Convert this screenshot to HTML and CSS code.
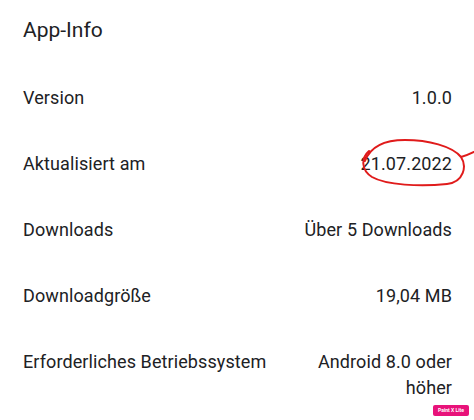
FILE: index.html
```html
<!DOCTYPE html>
<html lang="de">
<head>
    <meta charset="UTF-8">
    <meta name="viewport" content="width=device-width, initial-scale=1.0">
    <title>App-Info</title>
    <link rel="stylesheet" href="styles.css">
</head>
<body>

<div class="sheet">
    <h1 class="title">App-Info</h1>

    <!-- Liste der Informationen -->
    <div class="row">
        <span class="label">Version</span>
        <span class="value">1.0.0</span>
    </div>
    <div class="row">
        <span class="label">Aktualisiert am</span>
        <span class="value">21.07.2022</span>
    </div>
    <div class="row">
        <span class="label">Downloads</span>
        <span class="value">Über 5 Downloads</span>
    </div>
    <div class="row">
        <span class="label">Downloadgröße</span>
        <span class="value">19,04 MB</span>
    </div>
    <div class="row">
        <span class="label">Erforderliches Betriebssystem</span>
        <span class="value">Android 8.0 oder höher</span>
    </div>

    <!-- Markierung um das Datum -->
    <svg class="scribble" width="474" height="420" viewBox="0 0 474 420">
        <path d="M369 151 C361 158 361 170 372 177 C386 185 420 187 447 184 C464 182 467 166 461 157 C452 146 428 140 405 140 C388 140 371 145 365 161 M461 157 C465 156 470 154 474 152"
              fill="none" stroke="#e01b1b" stroke-width="2" stroke-linecap="round"/>
    </svg>

    <div class="badge">Paint X Lite</div>
</div>

</body>
</html>
```

FILE: styles.css
```css
body {
    margin: 0;
    background-color: #fff;
    font-family: Roboto, "Noto Sans", sans-serif;
    color: #202124;
}
.sheet {
    position: relative;
    width: 474px;
    height: 420px;
    padding: 0 22px 0 23px;
    box-sizing: border-box;
    overflow: hidden;
}
.title {
    margin: 0;
    padding: 16px 0 21px;
    font-size: 21px;
    font-weight: 400;
    line-height: 28px;
}
.row {
    display: flex;
    justify-content: space-between;
    align-items: flex-start;
    padding: 20px 0;
    font-size: 18px;
    line-height: 26px;
    letter-spacing: 0.1px;
}
.value {
    max-width: 150px;
    text-align: right;
}
.scribble {
    position: absolute;
    left: 0;
    top: 0;
    pointer-events: none;
}
.badge {
    position: absolute;
    right: 5px;
    bottom: 4px;
    width: 36px;
    height: 11px;
    background-color: #e8127a;
    border-radius: 2px;
    color: #fff;
    font-size: 5px;
    font-weight: 700;
    line-height: 11px;
    text-align: center;
}
```
